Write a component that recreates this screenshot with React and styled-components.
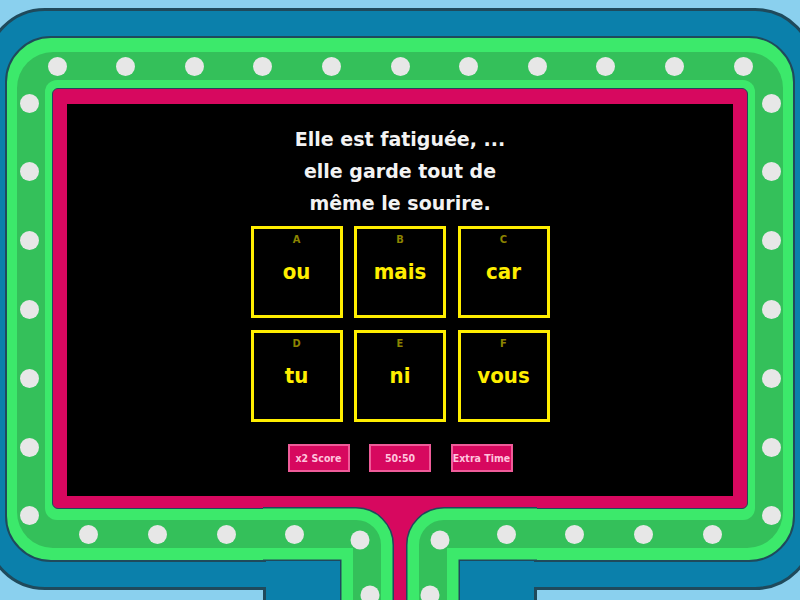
import React from "react";
import styled, { createGlobalStyle } from "styled-components";

const C = {
  sky: "#8ad0ee",
  blue: "#0b80ab",
  line: "#1f4a5c",
  lime: "#3ce96b",
  green: "#34c05a",
  pink: "#d7085f",
  dot: "#e7e7e7",
  yellow: "#ffee00",
};

const FONT = `"DejaVu Sans", "Liberation Sans", sans-serif`;
const NARROW = `"DejaVu Sans Condensed", "Liberation Sans Narrow", "DejaVu Sans", sans-serif`;

const GlobalStyle = createGlobalStyle`
  html, body {
    margin: 0;
    padding: 0;
    background: ${C.sky};
  }
  body {
    overflow: hidden;
  }
`;

const Stage = styled.div`
  position: relative;
  width: 800px;
  height: 600px;
  overflow: hidden;
  box-sizing: border-box;
  padding-top: 8px;
  background: ${C.sky};
`;

const Frame = styled.div`
  margin-left: -15px;
  width: 830px;
  height: 582px;
  box-sizing: border-box;
  border: 3px solid ${C.line};
  border-radius: 60px;
  background: ${C.blue};
  padding: 25px 17px;
`;

const OuterRing = styled.div`
  height: 100%;
  box-sizing: border-box;
  border: 2px solid ${C.line};
  border-radius: 46px;
  background: ${C.lime};
  padding: 14px 10px 12px;
`;

const Band = styled.div`
  height: 100%;
  box-sizing: border-box;
  border-radius: 36px;
  background: ${C.green};
  padding: 28px;
`;

const InnerRing = styled.div`
  height: 100%;
  box-sizing: border-box;
  border-radius: 12px;
  background: ${C.lime};
  padding: 8px 7px 11px;
`;

const Bezel = styled.div`
  height: 100%;
  box-sizing: border-box;
  border: 1px solid ${C.line};
  border-radius: 6px;
  background: ${C.pink};
  padding: 15px 14px 12px;
`;

const Screen = styled.div`
  height: 100%;
  box-sizing: border-box;
  background: #000;
  display: flex;
  flex-direction: column;
  align-items: center;
  padding-top: 19px;
`;

const Question = styled.p`
  margin: 0;
  font-family: ${FONT};
  font-weight: 700;
  font-size: 19px;
  line-height: 32px;
  color: #f3f3f3;
  text-align: center;
`;

const Answers = styled.div`
  margin-top: 7px;
  display: grid;
  grid-template-columns: repeat(3, 92px);
  grid-auto-rows: 92px;
  gap: 12px 11.5px;
`;

const Tile = styled.div`
  box-sizing: border-box;
  border: 3px solid ${C.yellow};
  display: flex;
  flex-direction: column;
  align-items: center;
  padding-top: 5px;
  font-family: ${NARROW};
  font-stretch: condensed;
  font-weight: 700;
`;

const Letter = styled.span`
  font-size: 11px;
  line-height: 12px;
  color: #8c8400;
`;

const Word = styled.span`
  margin-top: 12px;
  font-size: 22px;
  line-height: 28px;
  color: ${C.yellow};
`;

const Powerups = styled.div`
  margin-top: 22px;
  display: flex;
  gap: 19.5px;
`;

const Power = styled.button`
  width: 62px;
  height: 28px;
  box-sizing: border-box;
  padding: 0;
  border: 2px solid #ef5c99;
  background: ${C.pink};
  color: #ffc4dd;
  font-family: ${NARROW};
  font-stretch: condensed;
  font-weight: 700;
  font-size: 10.5px;
  cursor: pointer;
`;

const Dot = styled.span`
  position: absolute;
  width: 19px;
  height: 19px;
  margin: -9.5px 0 0 -9.5px;
  border-radius: 50%;
  background: ${C.dot};
`;

const Pedestal = styled.svg`
  position: absolute;
  left: 263px;
  top: 500px;
  display: block;
`;

const answers = [
  ["A", "ou"],
  ["B", "mais"],
  ["C", "car"],
  ["D", "tu"],
  ["E", "ni"],
  ["F", "vous"],
];

const dots = [
  ...Array.from({ length: 11 }, (_, i) => [57 + i * 68.6, 66]),
  ...Array.from({ length: 7 }, (_, i) => [29, 103 + i * 68.83]),
  ...Array.from({ length: 7 }, (_, i) => [771, 103 + i * 68.83]),
  ...[88, 157, 226, 294, 506, 574, 643, 712].map((x) => [x, 534]),
];

const leftArm = "M 0 34 H 93 A 11 11 0 0 1 104 45 V 110";
const rightArm = "M 274 34 H 181 A 11 11 0 0 0 170 45 V 110";

function Stand() {
  return (
    <Pedestal width="274" height="100" viewBox="0 0 274 100">
      <rect x="3" y="56" width="268" height="44" fill={C.blue} />
      <rect x="0" y="87" width="3" height="13" fill={C.line} />
      <rect x="271" y="87" width="3" height="13" fill={C.line} />
      <rect x="89" y="5" width="96" height="95" fill={C.pink} />
      {[leftArm, rightArm].map((d) => (
        <g key={d} fill="none">
          <path d={d} stroke={C.line} strokeWidth="54" />
          <path d={d} stroke={C.lime} strokeWidth="51" />
          <path d={d} stroke={C.green} strokeWidth="28" />
        </g>
      ))}
      <circle cx="97" cy="40" r="9.5" fill={C.dot} />
      <circle cx="107" cy="95" r="9.5" fill={C.dot} />
      <circle cx="177" cy="40" r="9.5" fill={C.dot} />
      <circle cx="167" cy="95" r="9.5" fill={C.dot} />
    </Pedestal>
  );
}

export default function App() {
  return (
    <>
      <GlobalStyle />
      <Stage>
        <Frame>
          <OuterRing>
            <Band>
              <InnerRing>
                <Bezel>
                  <Screen>
                    <Question>
                      Elle est fatiguée, ...
                      <br />
                      elle garde tout de
                      <br />
                      même le sourire.
                    </Question>
                    <Answers>
                      {answers.map(([letter, word]) => (
                        <Tile key={letter}>
                          <Letter>{letter}</Letter>
                          <Word>{word}</Word>
                        </Tile>
                      ))}
                    </Answers>
                    <Powerups>
                      <Power>x2 Score</Power>
                      <Power>50:50</Power>
                      <Power>Extra Time</Power>
                    </Powerups>
                  </Screen>
                </Bezel>
              </InnerRing>
            </Band>
          </OuterRing>
        </Frame>
        <Stand />
        {dots.map(([x, y], i) => (
          <Dot key={i} style={{ left: x, top: y }} />
        ))}
      </Stage>
    </>
  );
}
